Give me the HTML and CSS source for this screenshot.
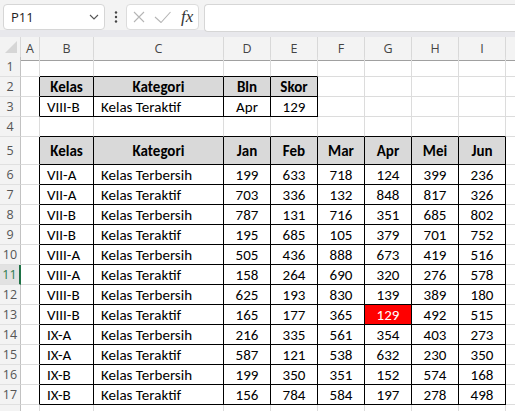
FILE: index.html
```html
<!DOCTYPE html>
<html>

<head>
    <meta name="viewport" content="width=device-width, initial-scale=1">
    <link rel="stylesheet" href="styles.css">
    <title>Rekap Skor Kelas</title>
</head>

<body>
    <div class="toolbar">
        <div class="namebox">
            <span>P11</span>
            <svg width="10" height="6" viewBox="0 0 10 6"><path d="M1 1l4 4 4-4" fill="none" stroke="#555" stroke-width="1.1"/></svg>
        </div>
        <div class="dots">
            <svg width="4" height="12" viewBox="0 0 4 12"><circle cx="2" cy="1.5" r="1.2" fill="#444"/><circle cx="2" cy="6" r="1.2" fill="#444"/><circle cx="2" cy="10.5" r="1.2" fill="#444"/></svg>
        </div>
        <div class="fxbox">
            <svg width="12" height="12" viewBox="0 0 12 12"><path d="M1 1l10 10M11 1L1 11" stroke="#b5b5b5" stroke-width="1.1"/></svg>
            <svg width="17" height="12" viewBox="0 0 17 12"><path d="M1 6l6 5.5L16.5 1" fill="none" stroke="#b5b5b5" stroke-width="1.1"/></svg>
            <span class="fx">fx</span>
        </div>
        <div class="formula"></div>
    </div>
    <div class="band"></div>

    <div class="sheet">
        <div class="row head">
            <div class="corner"><svg width="21" height="19" viewBox="0 0 21 19"><polygon points="5,16 17,4 17,16" fill="#d6d6d6"/></svg></div>
            <div class="ch">A</div><div class="ch">B</div><div class="ch">C</div><div class="ch">D</div><div class="ch">E</div>
            <div class="ch">F</div><div class="ch">G</div><div class="ch">H</div><div class="ch">I</div><div class="ch"></div>
        </div>

        <div class="row">
            <div class="rh">1</div><div class="c"></div>
            <div class="c bt"></div><div class="c bt"></div><div class="c bt"></div><div class="c bt"></div>
            <div class="c"></div><div class="c"></div><div class="c"></div><div class="c"></div><div class="c"></div>
        </div>
        <div class="row">
            <div class="rh">2</div><div class="c bl"></div>
            <div class="c bx h">Kelas</div><div class="c bx h">Kategori</div><div class="c bx h">Bln</div><div class="c bx h">Skor</div>
            <div class="c"></div><div class="c"></div><div class="c"></div><div class="c"></div><div class="c"></div>
        </div>
        <div class="row">
            <div class="rh">3</div><div class="c bl"></div>
            <div class="c bx t">VIII-B</div><div class="c bx t">Kelas Teraktif</div><div class="c bx n">Apr</div><div class="c bx n">129</div>
            <div class="c"></div><div class="c"></div><div class="c"></div><div class="c"></div><div class="c"></div>
        </div>
        <div class="row">
            <div class="rh">4</div><div class="c"></div>
            <div class="c bt"></div><div class="c bt"></div><div class="c bt"></div><div class="c bt"></div>
            <div class="c bt"></div><div class="c bt"></div><div class="c bt"></div><div class="c bt"></div><div class="c"></div>
        </div>
        <div class="row tall">
            <div class="rh">5</div><div class="c bl"></div>
            <div class="c bx h">Kelas</div><div class="c bx h">Kategori</div><div class="c bx h">Jan</div><div class="c bx h">Feb</div>
            <div class="c bx h">Mar</div><div class="c bx h">Apr</div><div class="c bx h">Mei</div><div class="c bx h">Jun</div><div class="c"></div>
        </div>

        <div class="row">
            <div class="rh">6</div><div class="c bl"></div>
            <div class="c bx t">VII-A</div><div class="c bx t">Kelas Terbersih</div>
            <div class="c bx n">199</div><div class="c bx n">633</div><div class="c bx n">718</div><div class="c bx n">124</div><div class="c bx n">399</div><div class="c bx n">236</div>
            <div class="c"></div>
        </div>
        <div class="row">
            <div class="rh">7</div><div class="c bl"></div>
            <div class="c bx t">VII-A</div><div class="c bx t">Kelas Teraktif</div>
            <div class="c bx n">703</div><div class="c bx n">336</div><div class="c bx n">132</div><div class="c bx n">848</div><div class="c bx n">817</div><div class="c bx n">326</div>
            <div class="c"></div>
        </div>
        <div class="row">
            <div class="rh">8</div><div class="c bl"></div>
            <div class="c bx t">VII-B</div><div class="c bx t">Kelas Terbersih</div>
            <div class="c bx n">787</div><div class="c bx n">131</div><div class="c bx n">716</div><div class="c bx n">351</div><div class="c bx n">685</div><div class="c bx n">802</div>
            <div class="c"></div>
        </div>
        <div class="row">
            <div class="rh">9</div><div class="c bl"></div>
            <div class="c bx t">VII-B</div><div class="c bx t">Kelas Teraktif</div>
            <div class="c bx n">195</div><div class="c bx n">685</div><div class="c bx n">105</div><div class="c bx n">379</div><div class="c bx n">701</div><div class="c bx n">752</div>
            <div class="c"></div>
        </div>
        <div class="row">
            <div class="rh">10</div><div class="c bl"></div>
            <div class="c bx t">VIII-A</div><div class="c bx t">Kelas Terbersih</div>
            <div class="c bx n">505</div><div class="c bx n">436</div><div class="c bx n">888</div><div class="c bx n">673</div><div class="c bx n">419</div><div class="c bx n">516</div>
            <div class="c"></div>
        </div>
        <div class="row">
            <div class="rh sel">11</div><div class="c bl"></div>
            <div class="c bx t">VIII-A</div><div class="c bx t">Kelas Teraktif</div>
            <div class="c bx n">158</div><div class="c bx n">264</div><div class="c bx n">690</div><div class="c bx n">320</div><div class="c bx n">276</div><div class="c bx n">578</div>
            <div class="c"></div>
        </div>
        <div class="row">
            <div class="rh">12</div><div class="c bl"></div>
            <div class="c bx t">VIII-B</div><div class="c bx t">Kelas Terbersih</div>
            <div class="c bx n">625</div><div class="c bx n">193</div><div class="c bx n">830</div><div class="c bx n">139</div><div class="c bx n">389</div><div class="c bx n">180</div>
            <div class="c"></div>
        </div>
        <div class="row">
            <div class="rh">13</div><div class="c bl"></div>
            <div class="c bx t">VIII-B</div><div class="c bx t">Kelas Teraktif</div>
            <div class="c bx n">165</div><div class="c bx n">177</div><div class="c bx n">365</div><div class="c bx n hot">129</div><div class="c bx n">492</div><div class="c bx n">515</div>
            <div class="c"></div>
        </div>
        <div class="row">
            <div class="rh">14</div><div class="c bl"></div>
            <div class="c bx t">IX-A</div><div class="c bx t">Kelas Terbersih</div>
            <div class="c bx n">216</div><div class="c bx n">335</div><div class="c bx n">561</div><div class="c bx n">354</div><div class="c bx n">403</div><div class="c bx n">273</div>
            <div class="c"></div>
        </div>
        <div class="row">
            <div class="rh">15</div><div class="c bl"></div>
            <div class="c bx t">IX-A</div><div class="c bx t">Kelas Teraktif</div>
            <div class="c bx n">587</div><div class="c bx n">121</div><div class="c bx n">538</div><div class="c bx n">632</div><div class="c bx n">230</div><div class="c bx n">350</div>
            <div class="c"></div>
        </div>
        <div class="row">
            <div class="rh">16</div><div class="c bl"></div>
            <div class="c bx t">IX-B</div><div class="c bx t">Kelas Terbersih</div>
            <div class="c bx n">199</div><div class="c bx n">350</div><div class="c bx n">351</div><div class="c bx n">152</div><div class="c bx n">574</div><div class="c bx n">168</div>
            <div class="c"></div>
        </div>
        <div class="row">
            <div class="rh">17</div><div class="c bl"></div>
            <div class="c bx t">IX-B</div><div class="c bx t">Kelas Teraktif</div>
            <div class="c bx n">156</div><div class="c bx n">784</div><div class="c bx n">584</div><div class="c bx n">197</div><div class="c bx n">278</div><div class="c bx n">498</div>
            <div class="c"></div>
        </div>
        <div class="row">
            <div class="rh"></div><div class="c"></div>
            <div class="c"></div><div class="c"></div><div class="c"></div><div class="c"></div>
            <div class="c"></div><div class="c"></div><div class="c"></div><div class="c"></div><div class="c"></div>
        </div>
    </div>
</body>

</html>
```

FILE: styles.css
```css
body {
    margin: 0;
    width: 515px;
    height: 411px;
    overflow: hidden;
    background: #ffffff;
    font-family: Calibri, Carlito, Lato, sans-serif;
}

/* formula bar */
.toolbar {
    display: flex;
    align-items: flex-start;
    height: 30px;
    padding: 4px 0 0 3px;
    box-sizing: border-box;
    background: #f3f3f3;
}

.namebox {
    display: flex;
    align-items: center;
    justify-content: space-between;
    width: 102px;
    height: 26px;
    padding: 0 5px 0 7px;
    box-sizing: border-box;
    background: #ffffff;
    border: 1px solid #d6d6d6;
    border-radius: 4px;
    font-family: "Open Sans", "Noto Sans", sans-serif;
    font-size: 13px;
    color: #222;
}

.dots {
    display: flex;
    align-items: center;
    justify-content: center;
    width: 21px;
    height: 26px;
}

.fxbox {
    display: flex;
    align-items: center;
    gap: 9px;
    width: 73px;
    height: 26px;
    padding-left: 6px;
    box-sizing: border-box;
    background: #ffffff;
    border: 1px solid #dcdcdc;
    border-radius: 4px;
}

.fx {
    font-family: "Liberation Serif", serif;
    font-style: italic;
    font-size: 17px;
    color: #333;
    margin-left: 1px;
}

.formula {
    flex: 1;
    height: 26px;
    margin-left: 5px;
    background: #ffffff;
    border: 1px solid #d6d6d6;
    border-right: none;
    border-radius: 4px 0 0 4px;
}

.band {
    height: 7px;
    background: #e8e8ec;
}

/* grid */
.sheet {
    width: 515px;
    overflow: hidden;
}

.row {
    display: grid;
    grid-template-columns: 21px 19px 54px 130px repeat(7, 47px);
    height: 20px;
}

.row.tall {
    height: 28px;
}

.row > div {
    box-sizing: border-box;
    min-width: 0;
}

.corner,
.ch {
    background: #f3f3f3;
    border-right: 1px solid #d8d8d8;
    border-bottom: 1px solid #a0a0a0;
}

.ch {
    display: flex;
    align-items: center;
    justify-content: center;
    font-family: "Open Sans", "Noto Sans", sans-serif;
    font-size: 12.5px;
    color: #444;
}

.rh {
    display: flex;
    align-items: center;
    justify-content: center;
    background: #f3f3f3;
    border-right: 1px solid #c2c2c2;
    border-bottom: 1px solid #e0e0e0;
    font-family: "Open Sans", "Noto Sans", sans-serif;
    font-size: 12.5px;
    color: #555;
}

.rh.sel {
    background: #e2e2e2;
    color: #2f7a4d;
    border-right: 2px solid #1e7145;
}

.c {
    display: flex;
    align-items: center;
    padding: 0 7px;
    border-right: 1px solid #dcdcdc;
    border-bottom: 1px solid #dcdcdc;
    white-space: nowrap;
    overflow: hidden;
    font-size: 15px;
    color: #000;
}

.c.n,
.c.h {
    justify-content: center;
    padding: 0;
}

.c.h {
    font-weight: bold;
    background: #d9d9d9;
}

.c.bx {
    border-right-color: #000;
    border-bottom-color: #000;
}

.c.bl {
    border-right-color: #000;
}

.c.bt {
    border-bottom-color: #000;
}

.c.hot {
    background: #ff0000;
    color: #ffffff;
}
```
